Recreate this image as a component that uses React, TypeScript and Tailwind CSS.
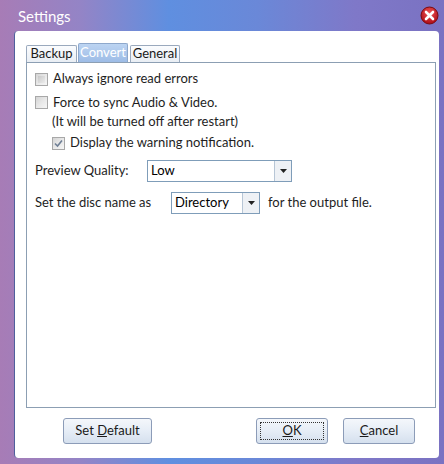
import React from "react";

const font = { fontFamily: "Lato, 'Liberation Sans', sans-serif" };

function Check({ checked = false, x = false }: { checked?: boolean; x?: boolean }) {
  return (
    <span className="w-[13px] h-[13px] shrink-0 border border-[#a8a8a8] bg-[linear-gradient(135deg,#d4d4d4_0%,#e8e8e8_50%,#f6f6f6_100%)] flex items-center justify-center">
      {checked && (
        <svg width="9" height="9" viewBox="0 0 9 9">
          <path d="M1 4.5 L3.5 7 L8 1.5" fill="none" stroke="#6f7f95" strokeWidth="1.6" />
        </svg>
      )}
      {x && <span className="w-[7px] h-[7px] bg-[linear-gradient(135deg,#c8c8c8,#ececec)]" />}
    </span>
  );
}

function Select({ value, w }: { value: string; w: string }) {
  return (
    <div className={`${w} h-[22px] border border-[#7f9db9] bg-white flex`}>
      <span className="flex-1 pl-[3px] flex items-center text-[13px] text-black">{value}</span>
      <span className="w-[17px] border-l border-[#b7c6d6] bg-[#eef1f5] flex items-center justify-center">
        <svg width="7" height="4" viewBox="0 0 7 4">
          <path d="M0 0 H7 L3.5 4 Z" fill="#222" />
        </svg>
      </span>
    </div>
  );
}

function Btn({ children, w, focus = false }: { children: React.ReactNode; w: string; focus?: boolean }) {
  return (
    <div className={`${w} h-[26px] rounded-[3px] border border-[#8c9cb8] bg-[linear-gradient(180deg,#f4f7fb_0%,#e6edf6_50%,#d5e0ee_100%)] flex items-center justify-center p-[3px]`}>
      <div className={`w-full h-full flex items-center justify-center text-[13px] text-[#1a1a1a] ${focus ? "border border-dotted border-[#333]" : ""}`}>
        <span>{children}</span>
      </div>
    </div>
  );
}

export default function App() {
  return (
    <div
      style={font}
      className="w-[444px] h-[464px] flex flex-col bg-[linear-gradient(90deg,#a77cb6_0%,#9484c6_18%,#5f8fe0_38%,#6a88d8_58%,#7f78c8_80%,#7a72c2_100%)]"
    >
      <div className="h-[31px] shrink-0 flex items-center justify-between pl-[18px] pr-[5px]">
        <span className="text-white text-[15px] leading-none mt-[1px]">Settings</span>
        <svg width="19" height="19" viewBox="0 0 19 19" className="mt-[-1px]">
          <defs>
            <radialGradient id="rg" cx="50%" cy="35%" r="60%">
              <stop offset="0%" stopColor="#f05a5a" />
              <stop offset="100%" stopColor="#b00e18" />
            </radialGradient>
          </defs>
          <circle cx="9.5" cy="9.5" r="8.5" fill="url(#rg)" stroke="#7a0a10" strokeWidth="1" />
          <path d="M6 6 L13 13 M13 6 L6 13" stroke="#fff" strokeWidth="2.6" strokeLinecap="round" />
        </svg>
      </div>
      <div className="flex-1 ml-[14px] mr-[5px] mb-[6px] bg-white rounded-[4px] border-l border-[#4f5f9c] flex flex-col pl-[11px] pr-[3px]">
        <div className="flex items-end h-[31px] shrink-0 gap-[1px]">
          <div className="w-[51px] h-[17px] border border-b-0 border-[#9aa9bd] rounded-t-[2px] bg-[linear-gradient(180deg,#fbfcfe,#e9eef4)] flex items-center justify-center text-[13px] text-[#1a1a1a]">
            Backup
          </div>
          <div className="w-[50px] h-[19px] border border-b-0 border-[#8ea8cc] rounded-t-[2px] bg-[linear-gradient(180deg,#bcd4f2,#9dbce6)] flex items-center justify-center text-[13px] text-white">
            Convert
          </div>
          <div className="ml-[1px] w-[50px] h-[17px] border border-b-0 border-[#9aa9bd] rounded-t-[2px] bg-[linear-gradient(180deg,#fbfcfe,#e9eef4)] flex items-center justify-center text-[13px] text-[#1a1a1a]">
            General
          </div>
        </div>
        <div className="h-[346px] border border-[#8c9fb3] flex flex-col pl-[8px] pt-[6px] text-[13px] text-[#1e1e1e]">
          <div className="h-[20px] flex items-center gap-[5px]">
            <Check x />
            <span>Always ignore read errors</span>
          </div>
          <div className="h-[19px] mt-[4px] flex items-center gap-[5px]">
            <Check />
            <span>Force to sync Audio &amp; Video.</span>
          </div>
          <div className="h-[19px] flex items-center pl-[17px]">
            <span>(It will be turned off after restart)</span>
          </div>
          <div className="h-[20px] mt-[2px] flex items-center gap-[5px] pl-[17px]">
            <Check checked />
            <span>Display the warning notification.</span>
          </div>
          <div className="mt-[7px] flex items-center">
            <span className="w-[112px]">Preview Quality:</span>
            <Select value="Low" w="w-[145px]" />
          </div>
          <div className="mt-[10px] flex items-center">
            <span className="w-[136px]">Set the disc name as</span>
            <Select value="Directory" w="w-[89px]" />
            <span className="ml-[8px]">for the output file.</span>
          </div>
        </div>
        <div className="mt-[10px] flex items-center">
          <div className="ml-[37px]">
            <Btn w="w-[89px]">
              Set <span className="underline">D</span>efault
            </Btn>
          </div>
          <div className="ml-auto mr-[21px] flex gap-[15px]">
            <Btn w="w-[72px]" focus>
              <span className="underline">O</span>K
            </Btn>
            <Btn w="w-[72px]">
              <span className="underline">C</span>ancel
            </Btn>
          </div>
        </div>
      </div>
    </div>
  );
}
